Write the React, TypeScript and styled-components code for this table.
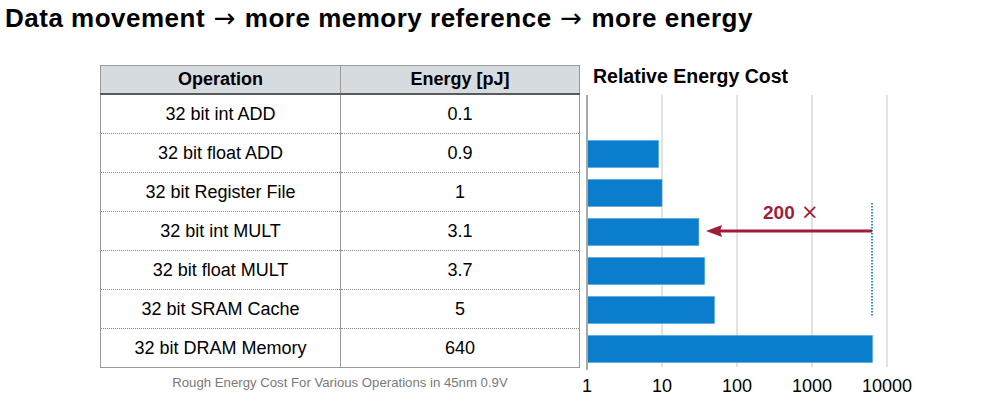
import React from "react";
import styled, { createGlobalStyle } from "styled-components";

const GlobalStyle = createGlobalStyle`
  body {
    margin: 0;
    background: #fff;
    font-family: "Liberation Sans", Arial, sans-serif;
    color: #000;
  }
`;

const Page = styled.div`
  width: 989px;
  height: 403px;
  overflow: hidden;
`;

const Title = styled.h1`
  margin: 0;
  padding: 2px 0 0 5px;
  height: 65px;
  box-sizing: border-box;
  font-size: 26px;
  line-height: 32px;
  font-weight: bold;
  letter-spacing: 0.5px;
  white-space: nowrap;
`;

const Arrow = styled.span`
  font-family: "DejaVu Sans", sans-serif;
  font-weight: normal;
  font-size: 26px;
  margin: 0 1px;
`;

const Body = styled.div`
  display: flex;
  padding-left: 100px;
`;

const TableCol = styled.div`
  width: 480px;
  display: flex;
  flex-direction: column;
`;

const Table = styled.table`
  width: 480px;
  border-collapse: collapse;
  border: 1px solid #9a9a9a;
  font-size: 18px;
`;

const HeadCell = styled.th`
  height: 27px;
  padding: 0;
  background: #d6dbdf;
  font-size: 18px;
  font-weight: bold;
  border-bottom: 2px solid #5a5a5a;
  border-right: 1px solid #9a9a9a;
  &:last-child {
    border-right: none;
  }
`;

const Row = styled.tr`
  & + & td {
    border-top: 1px dotted #8a8a8a;
  }
`;

const Cell = styled.td`
  height: 38px;
  padding: 0;
  text-align: center;
  border-right: 1px solid #9a9a9a;
  &:last-child {
    border-right: none;
  }
`;

const Caption = styled.div`
  margin-top: 7px;
  text-align: center;
  font-size: 13.2px;
  color: #7a7a7a;
`;

const ChartCol = styled.div`
  display: flex;
  flex-direction: column;
`;

const ChartTitle = styled.div`
  height: 30px;
  padding-left: 13px;
  font-size: 19.5px;
  font-weight: bold;
  line-height: 22px;
`;

const rows = [
  { op: "32 bit int ADD", e: "0.1", v: 0.1 },
  { op: "32 bit float ADD", e: "0.9", v: 0.9 },
  { op: "32 bit Register File", e: "1", v: 1 },
  { op: "32 bit int MULT", e: "3.1", v: 3.1 },
  { op: "32 bit float MULT", e: "3.7", v: 3.7 },
  { op: "32 bit SRAM Cache", e: "5", v: 5 },
  { op: "32 bit DRAM Memory", e: "640", v: 640 },
];

const X0 = 7;
const DEC = 75;
const ROW = 39;
const xOf = (rel: number) => X0 + Math.log10(rel) * DEC;

function Chart() {
  return (
    <svg width="345" height="308" viewBox="0 0 345 308">
      {[1, 2, 3, 4].map((i) => (
        <line key={i} x1={X0 + i * DEC} y1={0} x2={X0 + i * DEC} y2={272} stroke="#d9d9d9" strokeWidth="1.5" />
      ))}
      {rows.map((r, i) => {
        const rel = r.v / 0.1;
        if (rel <= 1) return null;
        const cy = i * ROW + 19.5;
        return <rect key={r.op} x={X0} y={cy - 13} width={xOf(rel) - X0} height={27} fill="#0a7dcc" stroke="#4da3dd" strokeWidth="0.6" />;
      })}
      <line x1={X0} y1={0} x2={X0} y2={275} stroke="#a8a8a8" strokeWidth="2" />
      <line x1={292} y1={108} x2={292} y2={221} stroke="#2f8ad6" strokeWidth="2" strokeDasharray="1.5 1.5" />
      <line x1={138} y1={136} x2={292} y2={136} stroke="#a01d38" strokeWidth="3" />
      <polygon points="126,136 142,130 140,136 142,142" fill="#a01d38" />
      <text x={183} y={124} fill="#a01d38" fontSize="19" fontWeight="bold" fontFamily="Liberation Sans, Arial, sans-serif">
        200
      </text>
      <text x={221} y={124} fill="#a01d38" fontSize="21" fontFamily="DejaVu Sans, sans-serif">
        ×
      </text>
      {["1", "10", "100", "1000", "10000"].map((t, i) => (
        <text key={t} x={X0 + i * DEC} y={297} fontSize="18" textAnchor="middle" fontFamily="Liberation Sans, Arial, sans-serif">
          {t}
        </text>
      ))}
    </svg>
  );
}

export default function App() {
  return (
    <Page>
      <GlobalStyle />
      <Title>
        Data movement <Arrow>→</Arrow> more memory reference <Arrow>→</Arrow> more energy
      </Title>
      <Body>
        <TableCol>
          <Table>
            <thead>
              <tr>
                <HeadCell>Operation</HeadCell>
                <HeadCell>Energy [pJ]</HeadCell>
              </tr>
            </thead>
            <tbody>
              {rows.map((r) => (
                <Row key={r.op}>
                  <Cell style={{ width: 239 }}>{r.op}</Cell>
                  <Cell>{r.e}</Cell>
                </Row>
              ))}
            </tbody>
          </Table>
          <Caption>Rough Energy Cost For Various Operations in 45nm 0.9V</Caption>
        </TableCol>
        <ChartCol>
          <ChartTitle>Relative Energy Cost</ChartTitle>
          <Chart />
        </ChartCol>
      </Body>
    </Page>
  );
}
